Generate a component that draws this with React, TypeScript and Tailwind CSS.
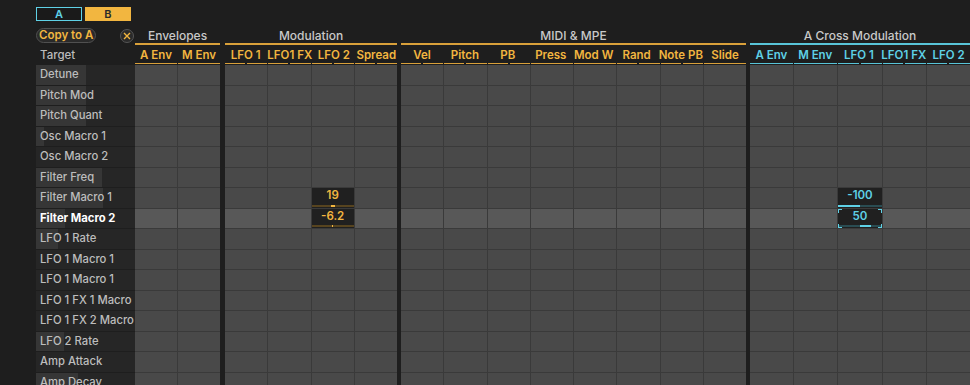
import React from "react";

type Col = { name: string; split?: boolean };
type Section = { title: string; width: number; cols: Col[]; accent: "orange" | "cyan" };

const ORANGE = "#f2b640";
const CYAN = "#5fd1e6";

const sections: Section[] = [
  {
    title: "Envelopes",
    width: 85,
    accent: "orange",
    cols: [{ name: "A Env" }, { name: "M Env" }],
  },
  {
    title: "Modulation",
    width: 172,
    accent: "orange",
    cols: [
      { name: "LFO 1", split: true },
      { name: "LFO1 FX", split: true },
      { name: "LFO 2", split: true },
      { name: "Spread", split: true },
    ],
  },
  {
    title: "MIDI & MPE",
    width: 345,
    accent: "orange",
    cols: [
      { name: "Vel", split: true },
      { name: "Pitch", split: true },
      { name: "PB", split: true },
      { name: "Press" },
      { name: "Mod W" },
      { name: "Rand", split: true },
      { name: "Note PB", split: true },
      { name: "Slide" },
    ],
  },
  {
    title: "A Cross Modulation",
    width: 220,
    accent: "cyan",
    cols: [
      { name: "A Env" },
      { name: "M Env" },
      { name: "LFO 1", split: true },
      { name: "LFO1 FX", split: true },
      { name: "LFO 2", split: true },
    ],
  },
];

const targets: [string, number][] = [
  ["Detune", 50],
  ["Pitch Mod", 50],
  ["Pitch Quant", 50],
  ["Osc Macro 1", 8],
  ["Osc Macro 2", 0],
  ["Filter Freq", 66],
  ["Filter Macro 1", 67],
  ["Filter Macro 2", 29],
  ["LFO 1 Rate", 22],
  ["LFO 1 Macro 1", 0],
  ["LFO 1 Macro 1", 0],
  ["LFO 1 FX 1 Macro", 0],
  ["LFO 1 FX 2 Macro", 0],
  ["LFO 2 Rate", 28],
  ["Amp Attack", 0],
  ["Amp Decay", 42],
];

const SELECTED_ROW = 7;

// values keyed by "section:col:row"
const values: Record<string, { text: string; from: number; to: number; selected?: boolean }> = {
  "1:2:6": { text: "19", from: 0.45, to: 0.56 },
  "1:2:7": { text: "-6.2", from: 0.48, to: 0.52 },
  "3:2:6": { text: "-100", from: 0, to: 0.5 },
  "3:2:7": { text: "50", from: 0.5, to: 0.75, selected: true },
};

function ValueCell({
  text,
  from,
  to,
  selected,
  accent,
}: {
  text: string;
  from: number;
  to: number;
  selected?: boolean;
  accent: "orange" | "cyan";
}) {
  const color = accent === "orange" ? ORANGE : CYAN;
  const track = accent === "orange" ? "#57441f" : "#2a4c52";
  return (
    <div className="relative h-full w-full bg-[#202020]">
      <div
        className="flex h-[16px] items-center justify-center text-[11.5px] font-semibold leading-none"
        style={{ color }}
      >
        {text}
      </div>
      <div className="absolute bottom-[1px] left-0 right-0 h-[2px]" style={{ background: track }}>
        <div
          className="absolute top-0 h-full"
          style={{ left: `${from * 100}%`, width: `${(to - from) * 100}%`, background: color }}
        />
      </div>
      {selected ? (
        <>
          <span className="absolute left-0 top-0 h-[4px] w-[4px] border-l border-t border-[#5fd1e6]" />
          <span className="absolute right-0 top-0 h-[4px] w-[4px] border-r border-t border-[#5fd1e6]" />
          <span className="absolute bottom-0 left-0 h-[4px] w-[4px] border-b border-l border-[#5fd1e6]" />
          <span className="absolute bottom-0 right-0 h-[4px] w-[4px] border-b border-r border-[#5fd1e6]" />
        </>
      ) : null}
    </div>
  );
}

function SectionBlock({ section, index }: { section: Section; index: number }) {
  const accent = section.accent === "orange" ? ORANGE : CYAN;
  const lineColor = section.accent === "orange" ? "#d9a03a" : "#58c4d8";
  return (
    <div className="flex shrink-0 flex-col" style={{ width: section.width }}>
      <div className="flex h-[15px] shrink-0 items-center justify-center text-[12px] font-medium text-[#c9c9c9]">
        {section.title}
      </div>
      <div className="h-[2px] shrink-0" style={{ background: lineColor }} />
      <div className="flex h-[18px] shrink-0 gap-px pt-[3px]">
        {section.cols.map((c, i) => (
          <div
            key={i}
            className="flex flex-1 items-center justify-center whitespace-nowrap text-[11.5px] font-semibold"
            style={{ color: accent }}
          >
            {c.name}
          </div>
        ))}
      </div>
      <div className="flex h-[1px] shrink-0 gap-px">
        {section.cols.map((c, i) =>
          c.split ? (
            <div key={i} className="flex flex-1 gap-[2px]">
              <div className="flex-1" style={{ background: lineColor }} />
              <div className="flex-1" style={{ background: lineColor }} />
            </div>
          ) : (
            <div key={i} className="flex-1" style={{ background: lineColor }} />
          ),
        )}
      </div>
      <div className="mt-[1px] flex shrink-0 flex-col gap-px bg-[#3a3a3a]">
        {targets.map((_, r) => (
          <div key={r} className="flex h-[19.5px] shrink-0 gap-px">
            {section.cols.map((_, ci) => {
              const v = values[`${index}:${ci}:${r}`];
              return (
                <div
                  key={ci}
                  className={`flex-1 ${r === SELECTED_ROW ? "bg-[#585858]" : "bg-[#494949]"}`}
                >
                  {v ? <ValueCell {...v} accent={section.accent} /> : null}
                </div>
              );
            })}
          </div>
        ))}
      </div>
    </div>
  );
}

export default function App() {
  return (
    <div
      className="flex h-[385px] w-[970px] items-start overflow-hidden bg-[#1e1e1e]"
      style={{ fontFamily: "Inter, 'Noto Sans', sans-serif" }}
    >
      {/* left target column */}
      <div className="flex w-[135px] shrink-0 flex-col pl-[36px]">
        <div className="mt-[7px] flex h-[14px] shrink-0 gap-[3px]">
          <div className="flex w-[46px] items-center justify-center border border-[#5fd1e6] bg-[#1a1a1a] text-[11px] font-semibold leading-none text-[#5fd1e6]">
            A
          </div>
          <div className="flex w-[46px] items-center justify-center bg-[#f2b640] text-[11px] font-semibold leading-none text-[#2a2a2a]">
            B
          </div>
        </div>
        <div className="mt-[7px] flex h-[15px] shrink-0 items-center">
          <div className="flex h-[15px] items-center whitespace-nowrap rounded-full border border-[#505050] bg-[#2a2a2a] px-[2px] text-[11.5px] font-semibold text-[#f2b640]">
            Copy to A
          </div>
          <div className="ml-[24px] flex h-[14px] w-[14px] items-center justify-center rounded-full border border-[#555] bg-[#2a2a2a]">
            <svg width="8" height="8" viewBox="0 0 8 8">
              <path d="M1 1L7 7M7 1L1 7" stroke="#f2b640" strokeWidth="1.4" />
            </svg>
          </div>
        </div>
        <div className="flex h-[22px] shrink-0 items-center pl-[4px] pt-[4px] text-[11.5px] font-medium text-[#bcbcbc]">
          Target
        </div>
        <div className="flex shrink-0 flex-col gap-px">
          {targets.map(([name, bar], r) => (
            <div key={r} className="relative h-[19.5px] shrink-0 bg-[#262626]">
              <div className="absolute bottom-0 left-0 top-0 bg-[#363636]" style={{ width: bar }} />
              <div
                className={`relative flex h-full items-center whitespace-nowrap pl-[4px] text-[11.25px] ${
                  r === SELECTED_ROW ? "font-bold text-white" : "font-medium text-[#bdbdbd]"
                }`}
              >
                {name}
              </div>
            </div>
          ))}
        </div>
      </div>

      {/* sections */}
      <div className="flex shrink-0 gap-[4px] pt-[28px]">
        {sections.map((s, i) => (
          <div key={i} className={i === 1 ? "ml-[1px]" : ""}>
            <SectionBlock section={s} index={i} />
          </div>
        ))}
      </div>
    </div>
  );
}
